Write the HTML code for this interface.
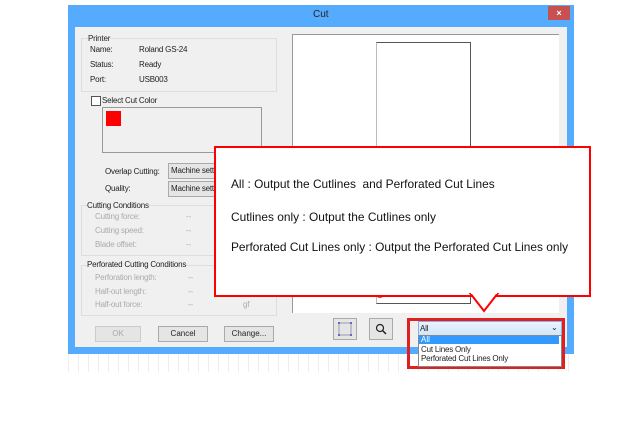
<!DOCTYPE html>
<html><head><style>
body{margin:0;width:628px;height:423px;background:#fff;position:relative;overflow:hidden;font-family:"Liberation Sans",sans-serif;}
.a{position:absolute;}
.t{font-size:8px;color:#222;letter-spacing:-0.2px}
.g{font-size:8px;color:#aaa;letter-spacing:-0.2px}
.grp{border:1px solid #ddd;}
.btn{position:absolute;background:#e5e5e5;border:1px solid #aaa;font-size:8px;text-align:center;line-height:14px;color:#222}
.c{font-family:"Liberation Sans",sans-serif;font-size:11.9px;color:#111;position:absolute;left:15px;white-space:nowrap}
</style></head><body>
<div class="a" style="left:68px;top:354px;width:505px;height:18px;background-image:linear-gradient(90deg,#eee 1px,transparent 1px);background-size:10px 10px;"></div>
<div class="a" style="left:68px;top:5px;width:506px;height:349px;background:#55acff;"></div>
<div class="a" style="left:75px;top:27px;width:492px;height:320px;background:#f0f0f0;"></div>
<div class="a" style="left:313px;top:9px;font-size:10px;color:#222">Cut</div>
<div class="a" style="left:548px;top:6px;width:22px;height:14px;background:#c75050;color:#fff;font-size:9px;text-align:center;line-height:14px;font-weight:bold">×</div>
<div class="a grp" style="left:81px;top:38px;width:194px;height:52px"></div>
<div class="a t" style="left:88px;top:34px;background:#f0f0f0">Printer</div>
<div class="a t" style="left:90px;top:45px">Name:</div><div class="a t" style="left:139px;top:45px">Roland GS-24</div>
<div class="a t" style="left:90px;top:60px">Status:</div><div class="a t" style="left:139px;top:60px">Ready</div>
<div class="a t" style="left:90px;top:75px">Port:</div><div class="a t" style="left:139px;top:75px">USB003</div>
<div class="a" style="left:91px;top:96px;width:8px;height:8px;border:1px solid #555;background:#fff"></div>
<div class="a t" style="left:102px;top:96px">Select Cut Color</div>
<div class="a" style="left:102px;top:107px;width:158px;height:44px;border:1px solid #999;background:#f0f0f0"></div>
<div class="a" style="left:106px;top:111px;width:15px;height:15px;background:#f00"></div>
<div class="a t" style="left:105px;top:167px">Overlap Cutting:</div>
<div class="a t" style="left:105px;top:184px">Quality:</div>
<div class="a" style="left:168px;top:163px;width:50px;height:14px;background:#e5e5e5;border:1px solid #aaa"></div>
<div class="a t" style="left:171px;top:166px">Machine setti</div>
<div class="a" style="left:168px;top:181px;width:50px;height:14px;background:#e5e5e5;border:1px solid #aaa"></div>
<div class="a t" style="left:171px;top:184px">Machine setti</div>
<div class="a grp" style="left:81px;top:205px;width:194px;height:49px"></div>
<div class="a t" style="left:87px;top:201px;background:#f0f0f0">Cutting Conditions</div>
<div class="a g" style="left:95px;top:212px">Cutting force:</div><div class="a g" style="left:186px;top:212px">--</div>
<div class="a g" style="left:95px;top:226px">Cutting speed:</div><div class="a g" style="left:186px;top:226px">--</div>
<div class="a g" style="left:95px;top:240px">Blade offset:</div><div class="a g" style="left:186px;top:240px">--</div>
<div class="a grp" style="left:81px;top:265px;width:194px;height:49px"></div>
<div class="a t" style="left:87px;top:260px;background:#f0f0f0">Perforated Cutting Conditions</div>
<div class="a g" style="left:95px;top:273px">Perforation length:</div><div class="a g" style="left:188px;top:273px">--</div>
<div class="a g" style="left:95px;top:287px">Half-out length:</div><div class="a g" style="left:188px;top:287px">--</div>
<div class="a g" style="left:95px;top:300px">Half-out force:</div><div class="a g" style="left:188px;top:300px">--</div><div class="a g" style="left:243px;top:300px">gf</div>
<div class="btn" style="left:95px;top:326px;width:44px;height:14px;color:#aaa;border-color:#ccc">OK</div>
<div class="btn" style="left:158px;top:326px;width:48px;height:14px">Cancel</div>
<div class="btn" style="left:224px;top:326px;width:48px;height:14px">Change...</div>
<div class="a" style="left:292px;top:34px;width:266px;height:278px;background:#fff;border-top:1px solid #999;border-left:1px solid #999"></div>
<div class="a" style="left:376px;top:42px;width:93px;height:260px;border:1px solid #555;border-left-color:#bbb;background:#fff"></div>
<div class="a" style="left:376px;top:290px;width:6px;height:6px;border:1px solid #e33;border-radius:50%"></div>
<div class="btn" style="left:333px;top:318px;width:22px;height:20px"><svg width="22" height="20"><rect x="5" y="4" width="12" height="12" fill="none" stroke="#99a" stroke-width="1"/><g fill="#66c"><rect x="4" y="3" width="2" height="2"/><rect x="16" y="3" width="2" height="2"/><rect x="4" y="15" width="2" height="2"/><rect x="16" y="15" width="2" height="2"/></g></svg></div>
<div class="btn" style="left:369px;top:318px;width:22px;height:20px"><svg width="22" height="20"><circle cx="10" cy="9" r="3.5" fill="none" stroke="#222" stroke-width="1.2"/><line x1="12.5" y1="11.5" x2="16" y2="15" stroke="#222" stroke-width="1.5"/></svg></div>
<div class="a" style="left:407px;top:318px;width:152px;height:45px;border:3px solid #e02020"></div>
<div class="a" style="left:418px;top:321px;width:142px;height:13px;background:linear-gradient(#eaf4fd,#cfe6fb);border:1px solid #7eb4ea"></div>
<div class="a t" style="left:420px;top:324px">All</div>
<div class="a t" style="left:551px;top:323px">⌄</div>
<div class="a" style="left:418px;top:335px;width:142px;height:30px;background:#fff;border:1px solid #888"></div>
<div class="a" style="left:419px;top:336px;width:140px;height:8px;background:#3399ff"></div>
<div class="a" style="left:421px;top:335px;font-size:8px;color:#fff">All</div>
<div class="a t" style="left:421px;top:345px">Cut Lines Only</div>
<div class="a t" style="left:421px;top:354px">Perforated Cut Lines Only</div>
<div class="a" style="left:214px;top:146px;width:373px;height:147px;background:#fff;border:2px solid #f00">
<div class="c" style="top:29px">All : Output the Cutlines&nbsp; and Perforated Cut Lines</div>
<div class="c" style="top:62px">Cutlines only : Output the Cutlines only</div>
<div class="c" style="top:92px">Perforated Cut Lines only : Output the Perforated Cut Lines only</div>
</div>
<svg class="a" style="left:468px;top:293px" width="34" height="20"><polygon points="2,0 16,18 30,0" fill="#fff" stroke="#f00" stroke-width="2"/><rect x="3" y="-2" width="26" height="3" fill="#fff"/></svg>
</body></html>
